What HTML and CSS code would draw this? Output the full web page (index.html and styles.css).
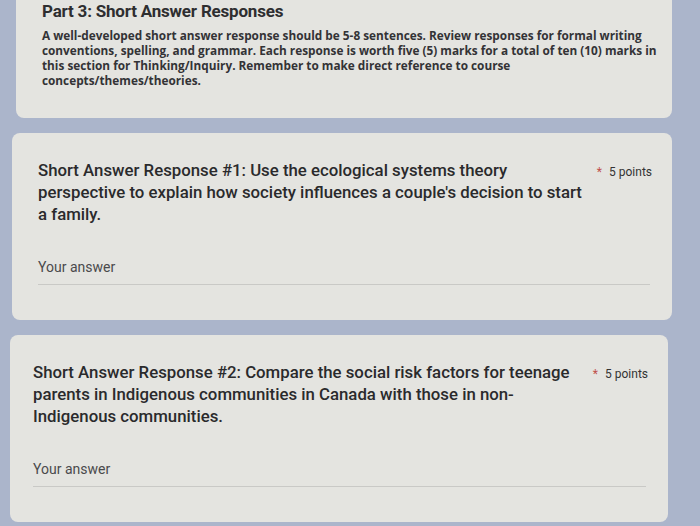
FILE: index.html
```html
<!DOCTYPE html>
<html>
<head>
<meta charset="utf-8">
<link rel="stylesheet" href="styles.css">
</head>
<body>
<div class="page">
  <section class="card intro">
    <h1 class="title">Part 3: Short Answer Responses</h1>
    <p class="desc">A well-developed short answer response should be 5-8 sentences. Review responses for formal writing<br>conventions, spelling, and grammar. Each response is worth five (5) marks for a total of ten (10) marks in<br>this section for Thinking/Inquiry. Remember to make direct reference to course<br>concepts/themes/theories.</p>
  </section>
  <section class="card question q1">
    <div class="qhead">
      <div class="qtext">Short Answer Response #1: Use the ecological systems theory<br>perspective to explain how society influences a couple's decision to start<br>a family.</div>
      <div class="points"><span class="req">*</span>5 points</div>
    </div>
    <div class="answer">Your answer</div>
    <div class="line"></div>
  </section>
  <section class="card question q2">
    <div class="qhead">
      <div class="qtext">Short Answer Response #2: Compare the social risk factors for teenage<br>parents in Indigenous communities in Canada with those in non-<br>Indigenous communities.</div>
      <div class="points"><span class="req">*</span>5 points</div>
    </div>
    <div class="answer">Your answer</div>
    <div class="line"></div>
  </section>
</div>
</body>
</html>
```
FILE: styles.css
```css
html, body {
  margin: 0;
  padding: 0;
}
body {
  width: 700px;
  height: 526px;
  overflow: hidden;
  background: #abb5cb;
  font-family: Roboto, "Liberation Sans", sans-serif;
  color: #2b2b2d;
}
.page {
  display: flex;
  flex-direction: column;
  gap: 15px;
  padding: 0 28px 0 12px;
}
.card {
  background: #e4e4e0;
  border-radius: 8px;
  box-sizing: border-box;
}
.intro {
  height: 118px;
  border-radius: 0 0 8px 8px;
  padding: 0 0 0 26px;
  margin-left: 4px;
}
.title {
  margin: 0;
  font-size: 17px;
  font-weight: 700;
  line-height: 22px;
  color: #2e2e30;
  letter-spacing: -0.2px;
}
.desc {
  margin: 6px 0 0;
  font-family: "Open Sans", Roboto, sans-serif;
  font-size: 11.8px;
  font-weight: 700;
  line-height: 15px;
  color: #333336;
  white-space: nowrap;
}
.question {
  height: 187px;
  padding: 26px 20px 0 26px;
}
.q2 {
  padding-left: 23px;
  margin-left: -2px;
  margin-right: 4px;
}
.qhead {
  display: flex;
  justify-content: space-between;
  align-items: flex-start;
}
.qtext {
  font-size: 16.8px;
  line-height: 22px;
  font-weight: 500;
  color: #2a2a2c;
}
.points {
  font-size: 12px;
  line-height: 16px;
  margin-top: 5px;
  color: #333;
  white-space: nowrap;
}
.req {
  color: #c0504a;
  margin-right: 7px;
}
.answer {
  margin-top: 33px;
  font-size: 14px;
  line-height: 18px;
  color: #4a4a4c;
}
.line {
  margin-top: 8px;
  height: 1px;
  background: #c9c9c6;
  margin-right: 2px;
}
```
